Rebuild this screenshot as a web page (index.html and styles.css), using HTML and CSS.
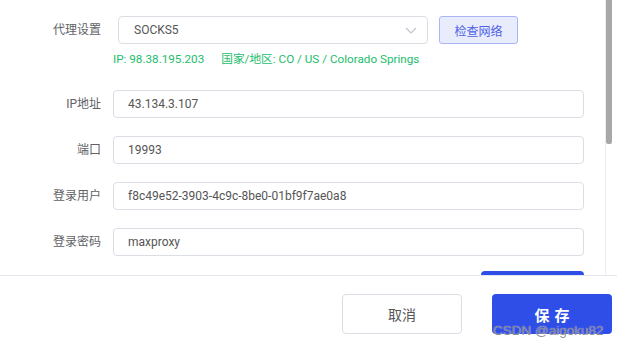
FILE: index.html
```html
<!DOCTYPE html>
<html lang="zh-CN">
<head>
    <meta charset="UTF-8">
    <meta name="viewport" content="width=device-width, initial-scale=1.0">
    <title>代理设置</title>
    <link rel="stylesheet" href="styles.css">
</head>
<body>
    <div class="dialog">
        <div class="dialog-body">
            <form class="form">
                <div class="form-row first">
                    <label class="form-label">代理设置</label>
                    <div class="form-control">
                        <div class="proxy-line">
                            <div class="select">
                                <span>SOCKS5</span>
                                <svg class="chevron" width="12" height="7" viewBox="0 0 12 7"><path d="M1 1l5 5 5-5" fill="none" stroke="#c0c4cc" stroke-width="1.2"/></svg>
                            </div>
                            <button type="button" class="btn-check">检查网络</button>
                        </div>
                        <div class="ip-info">
                            <span>IP: 98.38.195.203</span>
                            <span>国家/地区: CO / US / Colorado Springs</span>
                        </div>
                    </div>
                </div>
                <div class="form-row">
                    <label class="form-label">IP地址</label>
                    <div class="form-control"><input class="input" value="43.134.3.107"></div>
                </div>
                <div class="form-row">
                    <label class="form-label">端口</label>
                    <div class="form-control"><input class="input" value="19993"></div>
                </div>
                <div class="form-row">
                    <label class="form-label">登录用户</label>
                    <div class="form-control"><input class="input" value="f8c49e52-3903-4c9c-8be0-01bf9f7ae0a8"></div>
                </div>
                <div class="form-row">
                    <label class="form-label">登录密码</label>
                    <div class="form-control"><input class="input" value="maxproxy"></div>
                </div>
                <!-- 下方按钮被滚动区域遮住 -->
                <div class="form-actions">
                    <button type="button" class="btn-test" aria-label="测试"></button>
                </div>
            </form>
            <div class="scrollbar"><div class="scroll-thumb"></div></div>
        </div>
        <div class="dialog-footer">
            <button type="button" class="btn-cancel">取消</button>
            <button type="button" class="btn-save">保存</button>
        </div>
        <div class="watermark">CSDN @aigoku82</div>
    </div>
</body>
</html>
```

FILE: styles.css
```css
body {
    margin: 0;
    background-color: #fff;
    font-family: Roboto, "Noto Sans CJK SC", sans-serif;
    font-size: 12px;
    color: #555;
}

.dialog {
    width: 617px;
    height: 350px;
    position: relative;
    overflow: hidden;
}

.dialog-body {
    height: 275px;
    border-bottom: 1px solid #e6e6ef;
    position: relative;
    overflow: hidden;
}

.form {
    width: 584px;
    padding-top: 16px;
}

.form-row {
    display: flex;
    gap: 12px;
    margin-bottom: 18px;
}

.form-row.first {
    margin-bottom: 22px;
}

.form-label {
    width: 101px;
    flex-shrink: 0;
    text-align: right;
    line-height: 28px;
    color: #606266;
}

.form-control {
    flex: 1;
}

.proxy-line {
    display: flex;
    gap: 11px;
}

.select {
    width: 310px;
    height: 28px;
    box-sizing: border-box;
    margin-left: 5px;
    padding: 0 10px 0 15px;
    border: 1px solid #dcdee6;
    border-radius: 4px;
    display: flex;
    align-items: center;
    justify-content: space-between;
    color: #555;
}

.btn-check {
    width: 79px;
    height: 28px;
    border: 1px solid #a9b5f6;
    border-radius: 3px;
    background-color: #e9ecfd;
    color: #4d62e4;
    font-family: inherit;
    font-size: 12px;
    padding: 0;
}

.ip-info {
    display: flex;
    gap: 17px;
    margin-top: 6px;
    line-height: 18px;
    font-size: 11.7px;
    color: #22bd6c;
}

.input {
    display: block;
    width: 100%;
    height: 28px;
    box-sizing: border-box;
    padding: 0 14px;
    border: 1px solid #dcdee6;
    border-radius: 4px;
    font-family: inherit;
    font-size: 12px;
    color: #555;
    outline: none;
}

.form-actions {
    display: flex;
    justify-content: flex-end;
    margin-top: -3px;
}

.btn-test {
    width: 103px;
    height: 40px;
    border: none;
    border-radius: 4px;
    background-color: #2f4ee8;
}

.scrollbar {
    position: absolute;
    top: 0;
    right: 0;
    width: 11px;
    height: 100%;
    border-left: 1px solid #ececf2;
}

.scroll-thumb {
    width: 6px;
    height: 144px;
    background-color: #a8a8a8;
    border-radius: 0 0 2px 2px;
}

.dialog-footer {
    display: flex;
    justify-content: flex-end;
    gap: 30px;
    padding: 18px 5px 0 0;
}

.btn-cancel, .btn-save {
    width: 120px;
    height: 40px;
    border-radius: 4px;
    font-family: inherit;
    cursor: pointer;
}

.btn-cancel {
    border: 1px solid #dcdee6;
    background-color: #fff;
    color: #555;
    font-size: 14px;
}

.btn-save {
    border: none;
    background-color: #2f4ee8;
    color: #fff;
    font-size: 15px;
    font-weight: bold;
    letter-spacing: 5px;
    text-indent: 5px;
}

.watermark {
    position: absolute;
    left: 493px;
    top: 323px;
    font-family: "Liberation Sans", Arial, sans-serif;
    font-size: 13.5px;
    color: rgba(125, 125, 135, 0.9);
    text-shadow: 0 0 1px rgba(255, 255, 255, 0.7);
    white-space: nowrap;
}
```
